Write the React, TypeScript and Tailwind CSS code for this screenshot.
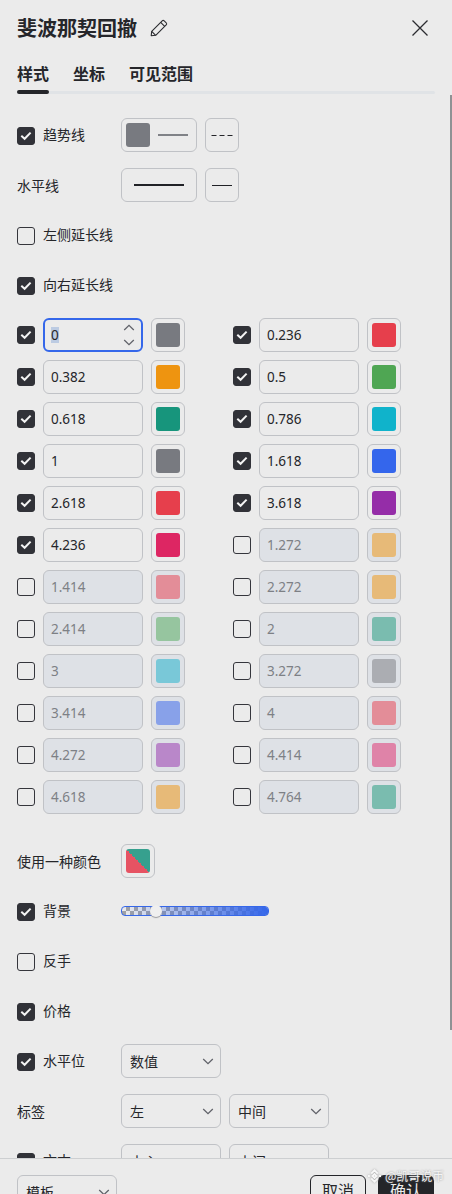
import { useState, type ReactNode } from "react";

type Level = { value: string; color: string; on: boolean };

const LEVELS: Level[] = [
  { value: "0", color: "#787a80", on: true },
  { value: "0.236", color: "#e63f4c", on: true },
  { value: "0.382", color: "#ee9410", on: true },
  { value: "0.5", color: "#4fa653", on: true },
  { value: "0.618", color: "#17957c", on: true },
  { value: "0.786", color: "#10b3cb", on: true },
  { value: "1", color: "#787a80", on: true },
  { value: "1.618", color: "#3466ec", on: true },
  { value: "2.618", color: "#e63f4c", on: true },
  { value: "3.618", color: "#952da8", on: true },
  { value: "4.236", color: "#dd2663", on: true },
  { value: "1.272", color: "#e7ba78", on: false },
  { value: "1.414", color: "#e38d98", on: false },
  { value: "2.272", color: "#e7ba78", on: false },
  { value: "2.414", color: "#96c59f", on: false },
  { value: "2", color: "#7abcaf", on: false },
  { value: "3", color: "#79c8d8", on: false },
  { value: "3.272", color: "#abadb2", on: false },
  { value: "3.414", color: "#88a1e9", on: false },
  { value: "4", color: "#e38d98", on: false },
  { value: "4.272", color: "#b987c9", on: false },
  { value: "4.414", color: "#df83a8", on: false },
  { value: "4.618", color: "#e7ba78", on: false },
  { value: "4.764", color: "#7abcaf", on: false },
];

function Checkbox({ checked, onChange }: { checked: boolean; onChange?: () => void }) {
  return (
    <button
      type="button"
      role="checkbox"
      aria-checked={checked}
      onClick={onChange}
      className={`flex size-[18px] shrink-0 items-center justify-center rounded-[3px] border ${
        checked ? "border-[#313238] bg-[#313238]" : "border-[#35363c]"
      }`}
    >
      {checked && (
        <svg width="12" height="10" viewBox="0 0 12 10" fill="none" stroke="#f3f3f3" strokeWidth="2">
          <path d="M1.3 4.8 4.6 7.8 10.6 1.6" />
        </svg>
      )}
    </button>
  );
}

function Chevron({ up = false }: { up?: boolean }) {
  return (
    <svg
      width="12"
      height="7"
      viewBox="0 0 12 7"
      fill="none"
      stroke="#606269"
      strokeWidth="1.3"
      className={up ? "rotate-180" : ""}
    >
      <path d="M1.2 1 6 5.6 10.8 1" />
    </svg>
  );
}

function Select({ value }: { value: string }) {
  return (
    <button
      type="button"
      className="flex h-[34px] w-[100px] shrink-0 items-center justify-between rounded-md border border-[#c0c2c6] pr-1.5 pl-2"
    >
      <span>{value}</span>
      <Chevron />
    </button>
  );
}

function Row({ label, checked, children }: { label: string; checked?: boolean; children?: ReactNode }) {
  const [on, setOn] = useState(checked);
  return (
    <div className="flex h-[34px] shrink-0 items-center">
      <div className="flex w-[104px] shrink-0 items-center gap-2 whitespace-nowrap">
        {on !== undefined && (
          <span className="pt-0.5">
            <Checkbox checked={on} onChange={() => setOn(!on)} />
          </span>
        )}
        <span className={on === undefined ? "" : "pb-0.5"}>{label}</span>
      </div>
      <div className="flex items-center gap-2">{children}</div>
    </div>
  );
}

function LevelRow({ level, focused }: { level: Level; focused: boolean }) {
  const [on, setOn] = useState(level.on);
  return (
    <div className="flex h-[34px] items-center gap-2">
      <Checkbox checked={on} onChange={() => setOn(!on)} />
      <div
        className={`flex h-[34px] w-[100px] items-center justify-between rounded-md font-['Noto_Sans','Noto_Sans_CJK_SC',sans-serif] text-[13.5px] ${
          focused ? "border-2 border-[#3567ea] pr-1.5 pl-1.5" : "border border-[#c0c2c6] px-[7px]"
        } ${on ? "" : "bg-[#dee1e6] text-[#7d8085]"}`}
      >
        <span className={focused ? "bg-[#bccbe2] leading-4" : ""}>{level.value}</span>
        {focused && (
          <span className="flex flex-col gap-2">
            <Chevron up />
            <Chevron />
          </span>
        )}
      </div>
      <div
        className={`flex size-[34px] items-center justify-center rounded-md border border-[#c0c2c6] ${
          on ? "" : "bg-[#dee1e6]"
        }`}
      >
        <div className="size-6 rounded-[3px]" style={{ backgroundColor: level.color }} />
      </div>
    </div>
  );
}

function OpacitySlider() {
  return (
    <div className="relative h-2.5 w-[148px]">
      <div className="h-full overflow-hidden rounded-[4px] border border-[#3567ea] bg-[repeating-conic-gradient(#a0a1a4_0%_25%,#ececec_0%_50%)] bg-size-[8px_8px]">
        <div className="h-full bg-linear-to-r from-[#3567ea]/0 to-[#3567ea]" />
      </div>
      <div className="absolute -top-px left-[29px] size-3 rounded-full bg-[#efefef] shadow-[0_1px_1px_#9b9ca0]" />
    </div>
  );
}

export default function App() {
  return (
    <div className="flex h-[1194px] w-[452px] flex-col overflow-hidden bg-[#ebebeb] font-['Noto_Sans_CJK_SC',sans-serif] text-sm leading-5 text-[#25262a]">
      <header className="flex h-14 shrink-0 items-center pr-[23px] pl-[17px]">
        <h1 className="text-xl font-bold">斐波那契回撤</h1>
        <svg
          width="18"
          height="18"
          viewBox="0 0 18 18"
          fill="none"
          stroke="#2b2c30"
          strokeWidth="1.1"
          strokeLinejoin="round"
          className="ml-[13px]"
        >
          <path d="M1.2 16.8 1.7 12.3 12.2 1.8Q13.2.8 14.2 1.8L16.2 3.8Q17.2 4.8 16.2 5.8L5.7 16.3Z" />
          <path d="M1.7 12.3 5.7 16.3M10.7 3.3 14.7 7.3" />
        </svg>
        <svg width="18" height="18" viewBox="0 0 18 18" stroke="#2b2c30" strokeWidth="1.3" className="ml-auto">
          <path d="M1.5 1.5 16.5 16.5M16.5 1.5 1.5 16.5" />
        </svg>
      </header>

      <nav className="mx-[17px] flex h-[38px] shrink-0 gap-6 text-base leading-5 font-bold">
        <span className="flex w-8 flex-col justify-between pt-[7px]">
          样式
          <span className="z-10 h-1 rounded-full bg-[#242529]" />
        </span>
        <span className="pt-[7px]">坐标</span>
        <span className="pt-[7px]">可见范围</span>
      </nav>
      <div className="-mt-[3px] ml-[17px] h-[3px] w-[418px] shrink-0 rounded-full bg-[#e0e3e6]" />

      <div className="flex min-h-0 flex-1 justify-between">
        <main className="flex flex-col gap-4 overflow-hidden pt-6 pl-[17px]">
          <Row label="趋势线" checked>
            <div className="flex h-[34px] w-[76px] items-center gap-2 rounded-md border border-[#c0c2c6] pl-1">
              <div className="size-6 rounded-[3px] bg-[#787a80]" />
              <div className="h-0.5 w-[30px] bg-[#808287]" />
            </div>
            <div className="flex size-[34px] items-center justify-center rounded-md border border-[#c0c2c6]">
              <svg width="22" height="1" stroke="#242529" strokeWidth="1" strokeDasharray="5 3">
                <path d="M.5 .5H21.5" />
              </svg>
            </div>
          </Row>
          <Row label="水平线">
            <div className="flex h-[34px] w-[76px] items-center justify-center rounded-md border border-[#c0c2c6]">
              <div className="h-0.5 w-[50px] bg-[#202126]" />
            </div>
            <div className="flex size-[34px] items-center justify-center rounded-md border border-[#c0c2c6]">
              <div className="h-px w-5 bg-[#202126]" />
            </div>
          </Row>
          <Row label="左侧延长线" checked={false} />
          <Row label="向右延长线" checked />

          <div className="mb-[14px] grid shrink-0 grid-cols-[216px_168px] gap-y-2">
            {LEVELS.map((level, i) => (
              <LevelRow key={level.value} level={level} focused={i === 0} />
            ))}
          </div>

          <Row label="使用一种颜色">
            <div className="flex size-[34px] items-center justify-center rounded-md border border-[#c0c2c6]">
              <div className="size-6 rounded-[3px] bg-[linear-gradient(45deg,#e65363_50%,#36a08e_50%)]" />
            </div>
          </Row>
          <Row label="背景" checked>
            <OpacitySlider />
          </Row>
          <Row label="反手" checked={false} />
          <Row label="价格" checked />
          <Row label="水平位" checked>
            <Select value="数值" />
          </Row>
          <Row label="标签">
            <Select value="左" />
            <Select value="中间" />
          </Row>
          <Row label="文本" checked>
            <Select value="中心" />
            <Select value="中间" />
          </Row>
        </main>
        <div className="mt-px h-[935px] w-[2px] bg-[#8f9294]" />
      </div>

      <footer className="relative flex h-9 shrink-0 items-start border-t border-[#cdcfd1] pt-4 pr-[18px] pl-[17px]">
        <Select value="模板" />
        <div className="ml-auto flex gap-3 text-base leading-5">
          <button type="button" className="h-[34px] w-14 rounded-md border border-[#242529] pb-1">
            取消
          </button>
          <button type="button" className="h-[34px] w-14 rounded-md bg-[#242529] pb-1 text-[#ebebeb]">
            确认
          </button>
        </div>
        <div className="absolute top-[9px] left-[368px] flex items-center gap-1 text-xs whitespace-nowrap text-[#f4f4f4] [text-shadow:0_0_2px_#8c8d90]">
          <svg width="13" height="14" viewBox="0 0 14 14" fill="none" stroke="#f8f8f8" strokeWidth="2" className="drop-shadow-[0_0_1px_#a0a0a0]">
            <path d="M3.5 4.5 7 1 10.5 4.5M3.5 9.5 7 13 10.5 9.5M7 5 9 7 7 9 5 7ZM1 6V8M13 6V8" />
          </svg>
          @凯哥说币
        </div>
      </footer>
    </div>
  );
}
